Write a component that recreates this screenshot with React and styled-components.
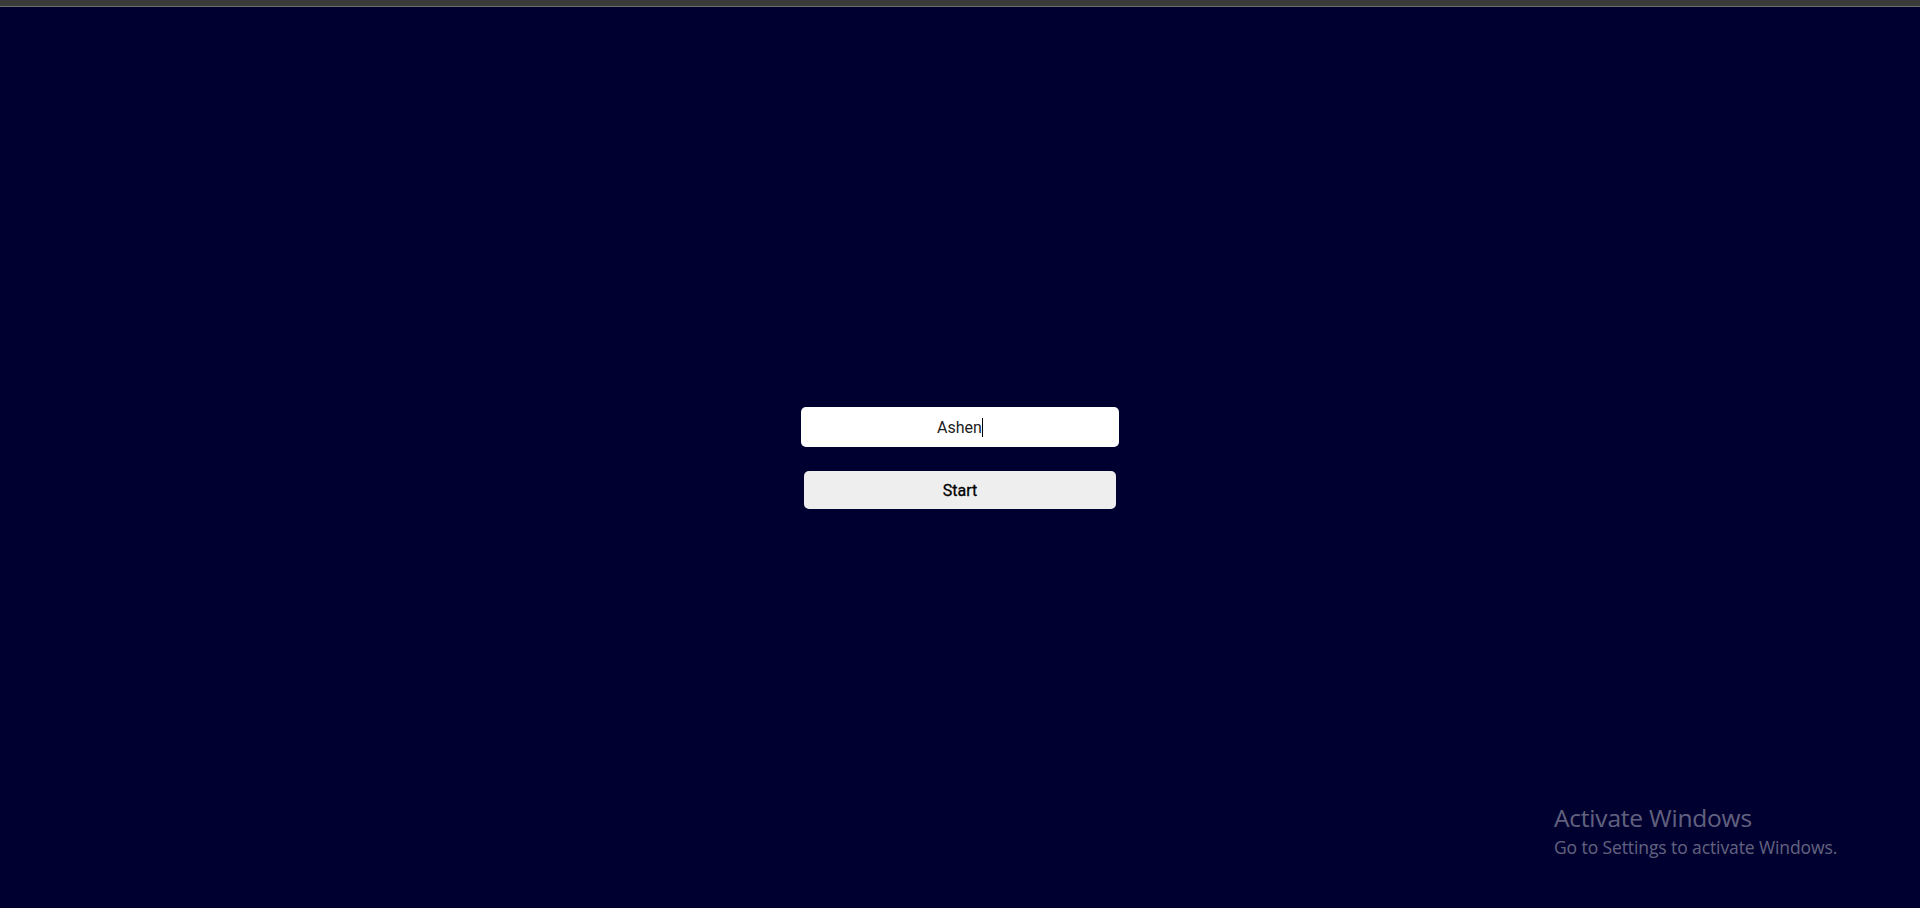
import React from "react";
import styled, { createGlobalStyle } from "styled-components";

const Global = createGlobalStyle`
  html, body { margin: 0; padding: 0; height: 100%; }
  body { background: #000030; font-family: Roboto, "Liberation Sans", sans-serif; }
  #root { height: 100%; }
`;

const Page = styled.div`
  height: 908px;
  display: flex;
  flex-direction: column;
  position: relative;
  overflow: hidden;
`;

const TopBar = styled.div`
  height: 6px;
  background: #3a3a3a;
  border-bottom: 1px solid #6e6e6e;
  flex: none;
`;

const Stage = styled.main`
  flex: 1;
  display: flex;
  align-items: center;
  justify-content: center;
`;

const Form = styled.div`
  width: 318px;
  display: flex;
  flex-direction: column;
  align-items: center;
  gap: 24px;
`;

const Field = styled.div`
  width: 100%;
  height: 40px;
  box-sizing: border-box;
  background: #ffffff;
  border-radius: 5px;
  display: flex;
  align-items: center;
  justify-content: center;
  font-family: Roboto, "Liberation Sans", sans-serif;
  font-size: 16px;
  color: #1c1c1c;
  padding-top: 1px;
`;

const Caret = styled.span`
  display: inline-block;
  width: 1px;
  height: 19px;
  background: #000;
  vertical-align: middle;
`;

const StartButton = styled.button`
  width: 312px;
  height: 38px;
  border: none;
  border-radius: 5px;
  background: #eeeeee;
  font-family: Roboto, "Liberation Sans", sans-serif;
  font-size: 16px;
  font-weight: 400;
  -webkit-text-stroke: 0.3px #000;
  color: #000;
  cursor: pointer;
  padding: 1px 0 0;
`;

const Watermark = styled.div`
  position: absolute;
  left: 1554px;
  top: 801px;
  color: rgba(255, 255, 255, 0.4);
  font-family: "Open Sans", "Noto Sans", sans-serif;
  pointer-events: none;
`;

const WatermarkTitle = styled.div`
  font-size: 24.5px;
  line-height: 33px;
  letter-spacing: -0.2px;
`;

const WatermarkText = styled.div`
  font-size: 17.5px;
  line-height: 26px;
  letter-spacing: -0.1px;
`;

export default function App() {
  return (
    <>
      <Global />
      <Page>
        <TopBar />
        <Stage>
          <Form>
            <Field>
              Ashen
              <Caret />
            </Field>
            <StartButton>Start</StartButton>
          </Form>
        </Stage>
        <Watermark>
          <WatermarkTitle>Activate Windows</WatermarkTitle>
          <WatermarkText>Go to Settings to activate Windows.</WatermarkText>
        </Watermark>
      </Page>
    </>
  );
}
